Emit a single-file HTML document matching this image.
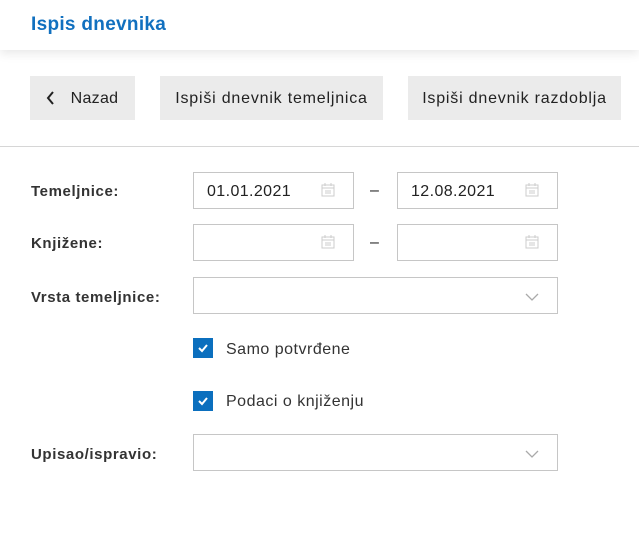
<!DOCTYPE html><html><head><style>
body{margin:0;width:639px;height:536px;background:#fff;font-family:"Liberation Sans",sans-serif;position:relative;overflow:hidden;color:#222}
.hd{position:absolute;left:0;top:0;width:639px;height:50px;background:#fff;box-shadow:0 3px 10px rgba(0,0,0,.1)}
.hd span{position:absolute;left:31px;top:14px;font-size:19px;font-weight:bold;color:#1170bf;letter-spacing:.3px}
.b{position:absolute;top:76px;height:44px;background:#ebebeb;font-size:16px;line-height:46px;text-align:center;color:#222;letter-spacing:.8px}
.hr{position:absolute;left:0;top:146px;width:639px;height:1px;background:#d6d6d6}
.l{position:absolute;left:31px;font-size:15px;font-weight:bold;color:#333;letter-spacing:.6px}
.i{position:absolute;border:1px solid #c6c6c6;box-sizing:border-box;height:37px;font-size:16px;line-height:38px;padding-left:13px;color:#222;letter-spacing:.4px}
.i svg{position:absolute;right:18px;top:10px}
.d{position:absolute;left:370px;font-size:16px}
.c{position:absolute;left:193px;width:20px;height:20px;background:#0b6fbe}
.ct{position:absolute;left:226px;font-size:16px;color:#333;letter-spacing:.5px}
</style></head><body>
<div class="hd"><span>Ispis dnevnika</span></div>
<div class="b" style="left:30px;width:105px;letter-spacing:.3px"><svg width="10" height="14" viewBox="0 0 10 14" style="position:absolute;left:16px;top:15px"><path d="M7 1L2 7l5 6" fill="none" stroke="#222" stroke-width="2"/></svg><span style="margin-left:24px">Nazad</span></div>
<div class="b" style="left:160px;width:223px">Ispiši dnevnik temeljnica</div>
<div class="b" style="left:408px;width:213px">Ispiši dnevnik razdoblja</div>
<div class="hr"></div>
<div class="l" style="top:183px">Temeljnice:</div>
<div class="i" style="left:193px;top:172px;width:161px">01.01.2021<svg width="14" height="14"><rect x="1" y="2" width="12" height="11" fill="none" stroke="#ccc"/><path d="M1 5h12M4 8h6M4 10h6M4 0v3M10 0v3" stroke="#ccc"/></svg></div>
<div class="d" style="top:182px">–</div>
<div class="i" style="left:397px;top:172px;width:161px">12.08.2021<svg width="14" height="14"><rect x="1" y="2" width="12" height="11" fill="none" stroke="#ccc"/><path d="M1 5h12M4 8h6M4 10h6M4 0v3M10 0v3" stroke="#ccc"/></svg></div>
<div class="l" style="top:235px">Knjižene:</div>
<div class="i" style="left:193px;top:224px;width:161px"><svg width="14" height="14"><rect x="1" y="2" width="12" height="11" fill="none" stroke="#ccc"/><path d="M1 5h12M4 8h6M4 10h6M4 0v3M10 0v3" stroke="#ccc"/></svg></div>
<div class="d" style="top:234px">–</div>
<div class="i" style="left:397px;top:224px;width:161px"><svg width="14" height="14"><rect x="1" y="2" width="12" height="11" fill="none" stroke="#ccc"/><path d="M1 5h12M4 8h6M4 10h6M4 0v3M10 0v3" stroke="#ccc"/></svg></div>
<div class="l" style="top:289px">Vrsta temeljnice:</div>
<div class="i" style="left:193px;top:277px;width:365px"><svg width="14" height="14" style="top:12px"><path d="M1 4l6 6 6-6" fill="none" stroke="#aaa" stroke-width="1.3"/></svg></div>
<div class="c" style="top:338px"><svg width="20" height="20"><path d="M6 10l3 3 5-6" fill="none" stroke="#fff" stroke-width="2"/></svg></div>
<div class="ct" style="top:341px">Samo potvrđene</div>
<div class="c" style="top:391px"><svg width="20" height="20"><path d="M6 10l3 3 5-6" fill="none" stroke="#fff" stroke-width="2"/></svg></div>
<div class="ct" style="top:393px">Podaci o knjiženju</div>
<div class="l" style="top:446px">Upisao/ispravio:</div>
<div class="i" style="left:193px;top:434px;width:365px"><svg width="14" height="14" style="top:12px"><path d="M1 4l6 6 6-6" fill="none" stroke="#aaa" stroke-width="1.3"/></svg></div>
</body></html>
